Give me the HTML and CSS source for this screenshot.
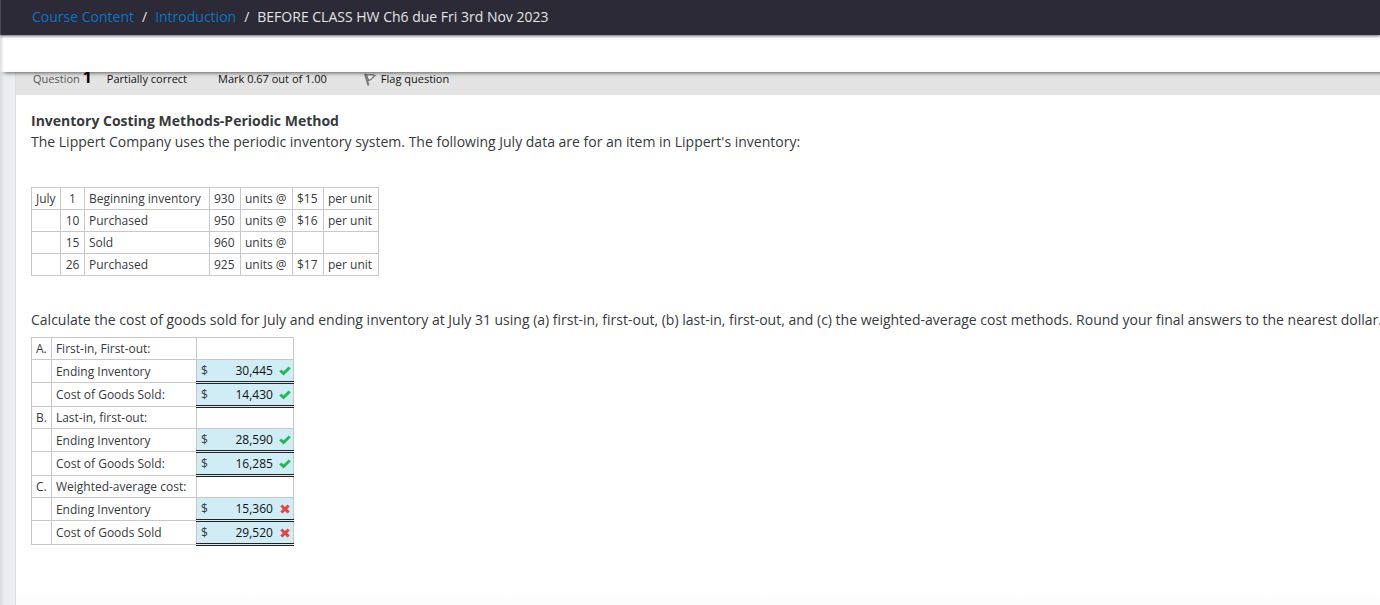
FILE: index.html
```html
<!DOCTYPE html>
<html lang="en">

<head>
    <meta charset="UTF-8">
    <meta name="viewport" content="width=device-width, initial-scale=1.0">
    <title>BEFORE CLASS HW Ch6 due Fri 3rd Nov 2023</title>
    <link rel="stylesheet" href="styles.css">
</head>

<body>
    <!-- Icons shared by the answer cells -->
    <svg class="sprite" aria-hidden="true">
        <symbol id="check" viewBox="0 0 12 10">
            <path d="M0.3 5.5 L2.3 3.5 L4.5 5.6 L9.7 0.5 L11.7 2.5 L4.5 9.6 Z" fill="#20b956" />
        </symbol>
        <symbol id="cross" viewBox="0 0 12 10">
            <path d="M1.3 2.6 L3.4 0.6 L6 3 L8.6 0.6 L10.7 2.6 L8.2 5 L10.7 7.4 L8.6 9.4 L6 7 L3.4 9.4 L1.3 7.4 L3.8 5 Z" fill="#e8413f" />
        </symbol>
    </svg>

    <header class="header">
        <nav class="breadcrumb">
            <a href="#">Course Content</a>
            <span>/</span>
            <a href="#">Introduction</a>
            <span>/</span>
            <span>BEFORE CLASS HW Ch6 due Fri 3rd Nov 2023</span>
        </nav>
    </header>
    <div class="toolbar"></div>

    <main class="page">
        <section class="question">
            <div class="info">
                <h3 class="number">Question <b>1</b></h3>
                <span class="state">Partially correct</span>
                <span class="mark">Mark 0.67 out of 1.00</span>
                <button type="button" class="flag">
                    <svg width="12" height="13" viewBox="0 0 12 13" aria-hidden="true">
                        <path d="M1 1 L4.5 12.5" stroke="#777" stroke-width="2" fill="none" />
                        <path d="M2.5 1.5 C5 3 7 0.5 11 2.5 C8.5 4 8.5 6.5 4.5 7.5 Z" stroke="#777" stroke-width="1.3" fill="#f2f2f2" />
                    </svg>
                    Flag question
                </button>
            </div>

            <div class="content">
                <h4>Inventory Costing Methods-Periodic Method</h4>
                <p>The Lippert Company uses the periodic inventory system. The following July data are for an item in Lippert's inventory:</p>

                <table class="inventory">
                    <colgroup>
                        <col class="col-month">
                        <col class="col-day">
                        <col class="col-event">
                        <col class="col-amount">
                        <col class="col-units">
                        <col class="col-amount">
                        <col class="col-per">
                    </colgroup>
                    <tr><td>July</td><td class="num">1</td><td>Beginning inventory</td><td>930</td><td>units @</td><td>$15</td><td>per unit</td></tr>
                    <tr><td></td><td class="num">10</td><td>Purchased</td><td>950</td><td>units @</td><td>$16</td><td>per unit</td></tr>
                    <tr><td></td><td class="num">15</td><td>Sold</td><td>960</td><td>units @</td><td></td><td></td></tr>
                    <tr><td></td><td class="num">26</td><td>Purchased</td><td>925</td><td>units @</td><td>$17</td><td>per unit</td></tr>
                </table>

                <p class="task">Calculate the cost of goods sold for July and ending inventory at July 31 using (a) first-in, first-out, (b) last-in, first-out, and (c) the weighted-average cost methods. Round your final answers to the nearest dollar.</p>

                <table class="answers">
                    <colgroup>
                        <col>
                        <col class="col-method">
                        <col class="col-answer">
                    </colgroup>
                    <tr><td>A.</td><td>First-in, First-out:</td><td></td></tr>
                    <tr>
                        <td></td>
                        <td><label for="fifoInv">Ending Inventory</label></td>
                        <td class="answer"><div><span>$</span><input type="text" id="fifoInv" value="30,445" readonly><svg><use href="#check" /></svg></div></td>
                    </tr>
                    <tr>
                        <td></td>
                        <td><label for="fifoCogs">Cost of Goods Sold:</label></td>
                        <td class="answer"><div><span>$</span><input type="text" id="fifoCogs" value="14,430" readonly><svg><use href="#check" /></svg></div></td>
                    </tr>
                    <tr><td>B.</td><td>Last-in, first-out:</td><td></td></tr>
                    <tr>
                        <td></td>
                        <td><label for="lifoInv">Ending Inventory</label></td>
                        <td class="answer"><div><span>$</span><input type="text" id="lifoInv" value="28,590" readonly><svg><use href="#check" /></svg></div></td>
                    </tr>
                    <tr>
                        <td></td>
                        <td><label for="lifoCogs">Cost of Goods Sold:</label></td>
                        <td class="answer"><div><span>$</span><input type="text" id="lifoCogs" value="16,285" readonly><svg><use href="#check" /></svg></div></td>
                    </tr>
                    <tr><td>C.</td><td>Weighted-average cost:</td><td></td></tr>
                    <tr>
                        <td></td>
                        <td><label for="avgInv">Ending Inventory</label></td>
                        <td class="answer"><div><span>$</span><input type="text" id="avgInv" value="15,360" readonly><svg><use href="#cross" /></svg></div></td>
                    </tr>
                    <tr>
                        <td></td>
                        <td><label for="avgCogs">Cost of Goods Sold</label></td>
                        <td class="answer"><div><span>$</span><input type="text" id="avgCogs" value="29,520" readonly><svg><use href="#cross" /></svg></div></td>
                    </tr>
                </table>
            </div>
        </section>
    </main>
</body>

</html>
```
FILE: styles.css
```css
* {
    margin: 0;
    padding: 0;
    box-sizing: border-box;
}

body {
    display: flex;
    flex-direction: column;
    min-height: 100vh;
    overflow-x: hidden;
    background: #e9eaee;
    color: #373a3c;
    font-family: "Open Sans", sans-serif;
    font-size: 14px;
    line-height: 21px;
}

.sprite {
    display: none;
}

/* Top bars */
.header {
    position: relative;
    z-index: 3;
    padding: 6px 32px 8px 31px;
    border-left: 1px solid #4b4a54;
    background: #2b2a36;
    color: #e4e4e6;
    box-shadow: 0 1px 3px rgba(0, 0, 0, 0.6);
}

.breadcrumb {
    display: flex;
    gap: 8px;
    white-space: nowrap;
}

.breadcrumb a {
    color: #0b74c4;
    text-decoration: none;
}

.toolbar {
    position: relative;
    z-index: 2;
    height: 37px;
    background: #fff;
    box-shadow: 4px 1px 4px rgba(0, 0, 0, 0.6), inset 3px 0 3px -1px #ddd;
}

/* Question */
.page {
    display: flex;
    flex: 1;
    padding-left: 15px;
    background: linear-gradient(to right, #d9dadd, #ebecef 5px);
}

.question {
    flex: 1;
    border-left: 1px solid #dcdde2;
    background: linear-gradient(to top, #fafafa, #fff 14px);
}

/* The top of this bar slides under the toolbar */
.info {
    display: flex;
    align-items: baseline;
    height: 31px;
    margin-top: -8px;
    padding-left: 17px;
    background: #e3e3e3;
    color: #111;
    font-size: 11px;
    line-height: 26px;
}

.number {
    margin-right: 15px;
    color: #555;
    font-size: 11px;
    font-weight: 400;
}

.number b {
    color: #000;
    font-size: 16px;
}

.state {
    margin-right: 31px;
}

.mark {
    margin-right: 37px;
}

.flag {
    display: flex;
    align-items: center;
    align-self: flex-start;
    gap: 5px;
    padding-top: 2px;
    border: none;
    background: none;
    color: inherit;
    font: inherit;
    cursor: pointer;
}

.content {
    padding: 15px 0 60px 15px;
}

.content p {
    white-space: nowrap;
}

h4 {
    font-size: 14px;
    font-weight: 700;
}

.content .task {
    margin: 33px 0 7px;
}

/* Tables */
table {
    border-collapse: collapse;
    font-size: 12px;
    line-height: 19px;
}

td {
    height: 22px;
    padding: 1px 4px;
    border: 1px solid #c8c8c8;
    white-space: nowrap;
}

.inventory {
    margin-top: 35px;
}

.num {
    text-align: center;
}

.col-month {
    width: 29px;
}

.col-day {
    width: 24px;
}

.col-event {
    width: 125px;
}

.col-amount {
    width: 31px;
}

.col-units {
    width: 52px;
}

.col-per {
    width: 55px;
}

.col-method {
    width: 145px;
}

.col-answer {
    width: 97px;
}

.answers .answer {
    padding: 0;
    border-bottom: 3px double #222;
    background: #d0ecf5;
}

.answer div {
    display: flex;
    align-items: center;
    height: 21px;
    padding: 0 2px 0 4px;
}

.answer input {
    flex: 1;
    width: 0;
    min-width: 0;
    margin-right: 6px;
    border: none;
    background: none;
    color: #111;
    font: inherit;
    text-align: right;
}

.answer svg {
    width: 12px;
    height: 10px;
}
```
